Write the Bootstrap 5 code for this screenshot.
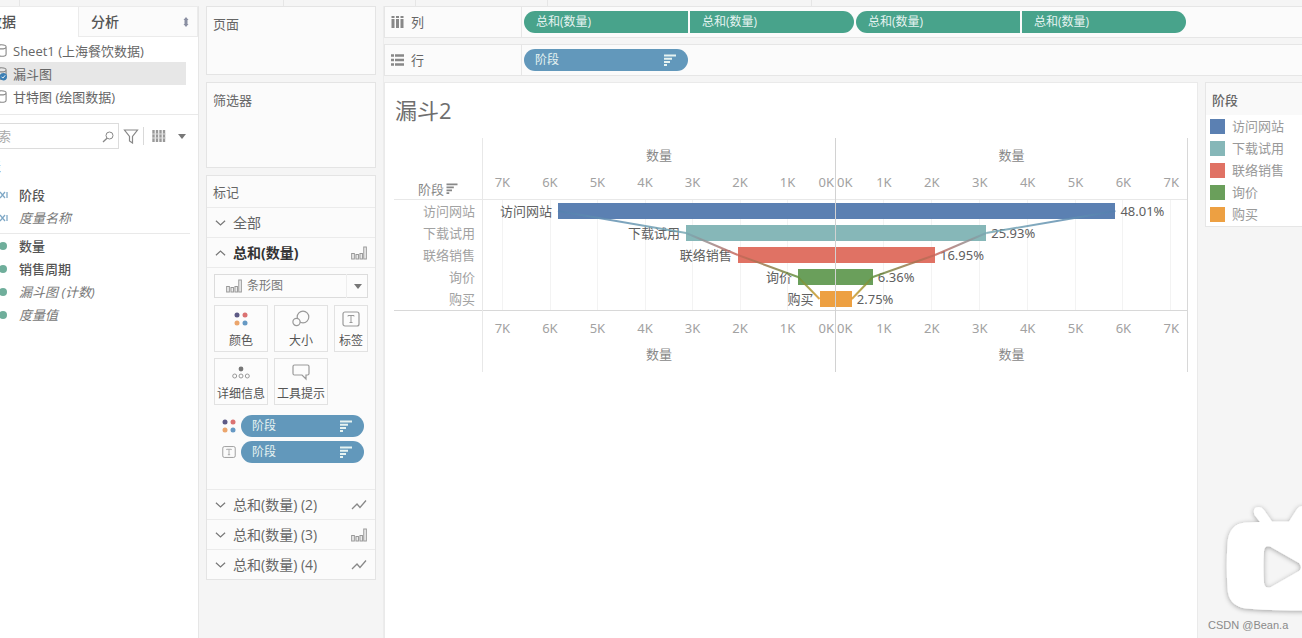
<!DOCTYPE html>
<html lang="zh-CN">
<head>
<meta charset="utf-8">
<meta name="viewport" content="width=device-width, initial-scale=1">
<title>漏斗2</title>
<link href="https://cdn.jsdelivr.net/npm/bootstrap@5.3.0/dist/css/bootstrap.min.css" rel="stylesheet">
<style>
  body { font-family: "Open Sans", "Noto Sans CJK SC", sans-serif; font-size: 13px; line-height: 18px; color: #666; background: #f5f5f5; overflow-x: hidden; }
  button { font: inherit; color: inherit; }
  svg { display: block; flex: none; }
  a { color: inherit; text-decoration: none; }
  .topstrip { height: 6px; padding-left: 19px; }
  .topstrip i { width: 132px; border-left: 1px solid #e6e6e6; }

  /* data pane */
  .datapane { width: 223px; margin-left: -24px; background: #fff; border-right: 1px solid #e6e6e6; border-top: 1px solid #ebebeb; }
  .dtab { height: 30px; font-size: 14px; border: 0; background: #fff; color: #555; font-weight: 500; }
  .dtab.first { width: 102px; padding-left: 12px; }
  .dtab.second { background: #fbfbfb; border: 1px solid #ebebeb; border-top: 0; padding: 0 7px 0 12px; }
  .sources { padding: 2px 0 6px; border-bottom: 1px solid #e9e9e9; margin-bottom: 8px; }
  .src { height: 23px; padding-left: 20px; margin-right: 12px; gap: 6px; }
  .src.on { background: #e7e7e7; }
  .find { height: 26px; width: 143px; border: 1px solid #dcdcdc; border-radius: 0; padding: 0 24px 0 8px; font-size: 13px; }
  .find::placeholder { color: #aaa; }
  .iconbtn { border: 0; background: none; padding: 0; }
  .fld { height: 23px; gap: 11px; padding-left: 22px; color: #555; }
  .fld span { font-weight: 500; }
  .fld em { color: #777; }
  .rule { height: 1px; background: #e9e9e9; }

  /* cards */
  .shelfcol { width: 185px; padding: 0 7px; gap: 7px; border-right: 1px solid #ececec; }
  .panelbox { background: #fbfbfb; border: 1px solid #e4e4e4; padding: 8px 6px; }
  .h-pages { height: 69px; } .h-filters { height: 86px; }
  .marktitle { padding: 7px 6px 6px; }
  .markrow { height: 30px; padding: 0 8px; border: 0; border-top: 1px solid #ebebeb; background: none; gap: 7px; font-size: 14px; color: #666; text-align: left; }
  .markrow.open { color: #333; font-weight: 700; }
  .markbody { border-top: 1px solid #ebebeb; padding: 6px 7px 26px; }
  .picker select { height: 24px; font-size: 12px; line-height: 16px; color: #777; padding: 0 30px 0 32px; border: 1px solid #dcdcdc; border-radius: 0; background: #fcfcfc; }
  .picker .lead-ico { left: 12px; top: 5px; }
  .picker .drop { right: 0; top: 0; width: 22px; height: 24px; border-left: 1px solid #eee; }
  .marks { display: grid; grid-template-columns: 54px 54px 1fr; gap: 6px; margin: 7px 0 10px; }
  .marks button { height: 47px; border: 1px solid #e2e2e2; background: #fcfcfc; padding: 4px 0 0; font-size: 12px; color: #555; gap: 4px; white-space: nowrap; }
  .markpill { padding: 0 4px 0 8px; gap: 5px; }
  .pill { height: 22px; border: 0; color: #e6f3f1; padding: 0 12px; font-size: 12px; }
  .pill.green { background: #48a38b; } .pill.blue { background: #6298bb; padding-left: 11px; }
  .w-shelf { width: 164px; }
  .r-l { border-radius: 11px 0 0 11px; } .r-r { border-radius: 0 11px 11px 0; }

  /* shelves */
  .shelves { gap: 6px; min-width: 0; }
  .shelf { height: 32px; background: #fbfbfb; border: 1px solid #e6e6e6; border-right: 0; gap: 2px; }
  .shelfname { width: 137px; border-right: 1px solid #e6e6e6; padding-left: 6px; gap: 7px; height: 30px; }

  /* worksheet */
  .sheet { background: #fff; border: 1px solid #eaeaea; border-bottom: 0; padding: 12px 9px 0; }
  .sheet h1 { font-size: 22px; line-height: 30px; margin: 0 0 13px 1px; color: #6e6e6e; font-weight: 400; }
  .funnel { display: grid; grid-template-columns: 88px 1fr 1fr; font-family: "Noto Sans", "Noto Sans CJK SC", sans-serif; }
  .heads { text-align: right; color: #a2a2a2; }
  .heads .top { height: 61px; padding: 0 24px 1px 0; color: #888; gap: 2px; }
  .heads .names { border-top: 1px solid #e8e8e8; border-bottom: 1px solid #d8d8d8; padding-right: 7px; }
  .heads .names div { line-height: 22px; }
  .pane { border-left: 1px solid #e8e8e8; min-width: 0; }
  .pane.right { border-left-color: #d2d2d2; border-right: 1px solid #d8d8d8; }
  .ptitle { line-height: 35px; text-align: center; color: #888; }
  .ticks { display: flex; height: 18px; color: #a2a2a2; }
  .ticks span { flex: none; text-align: center; width: var(--step); }
  .ticks span:first-child { width: calc(var(--step) / 2); text-align: left; padding-left: 1px; }
  .left .ticks, .left .line-row { flex-direction: row-reverse; }
  .left .ticks span:first-child { text-align: right; padding: 0 1px 0 0; }
  .left { --step: 13.5%; --dir: to left; } .right { --step: 13.65%; --dir: to right; }
  .ticks.above { margin-bottom: 8px; } .ticks.below { margin-top: 8px; }
  .plot { border-top: 1px solid #e8e8e8; border-bottom: 1px solid #d8d8d8; background: repeating-linear-gradient(var(--dir), transparent 0 calc(var(--step) - 1px), #f3f3f3 0 var(--step)); }
  .line-row { display: flex; align-items: center; height: 22px; gap: 6px; white-space: nowrap; color: #606060; }
  .right .line-row { gap: 5px; }
  .line-row i { height: 16px; flex: none; }
  .links { left: 0; top: 0; opacity: .85; }
  .links line { stroke-width: 2px; vector-effect: non-scaling-stroke; }

  /* legend */
  .legend { width: 97px; margin-left: 7px; background: #fff; border: 1px solid #e6e6e6; border-right: 0; padding-bottom: 1px; }
  .legend h2 { font-size: 13px; line-height: 18px; margin: 0; padding: 8px 6px 6px; background: #f9f9f9; font-weight: 500; }
  .legend li { height: 22px; padding-left: 4px; gap: 7px; color: #999; white-space: nowrap; }
  .legend li i { width: 15px; height: 15px; }
  .stamp { right: 0; bottom: 6px; width: 96px; }
  .stamp p { font: 11px/14px "Liberation Sans", sans-serif; color: #8a8a8a; margin: 0 0 0 2px; white-space: nowrap; }
</style>
</head>
<body>
<svg width="0" height="0" class="position-absolute">
  <defs>
    <symbol id="i-sort" viewBox="0 0 12 12"><path d="M0 1.5h12M0 4.8h8M0 8h6M0 11h3" stroke="currentColor" stroke-width="2"/></symbol>
    <symbol id="i-down" viewBox="0 0 12 8"><path d="M1 1.5l5 4.5 5-4.5" fill="none" stroke="#777" stroke-width="1.3"/></symbol>
    <symbol id="i-up" viewBox="0 0 12 8"><path d="M1 6.5l5-4.5 5 4.5" fill="none" stroke="#777" stroke-width="1.3"/></symbol>
    <symbol id="i-bars" viewBox="0 0 16 14"><path d="M.7 7.500h2.600v5.500H.7zM5 8.500h2.400v4.500H5zM9 7.500h2.400V13H9zM12.800 1h2.500v12h-2.500z" fill="none" stroke="#999" stroke-width="1.100"/></symbol>
    <symbol id="i-line" viewBox="0 0 16 12"><path d="M1 10l5-5 3 3.500 6-7" fill="none" stroke="#888" stroke-width="1.300"/></symbol>
    <symbol id="i-dots" viewBox="0 0 14 14"><circle cx="3" cy="3" r="2.500" fill="#5d5a85"/><circle cx="11" cy="3" r="2.500" fill="#db7272"/><circle cx="3" cy="11" r="2.500" fill="#eba56c"/><circle cx="11" cy="11" r="2.500" fill="#6699c4"/></symbol>
    <symbol id="i-text" viewBox="0 0 18 16"><rect x="1" y="1" width="16" height="14" rx="2" fill="none" stroke="#999" stroke-width="1.200"/><path d="M6 5.500V4.500h6v1M9 4.500v7M7.500 11.500h3" fill="none" stroke="#999"/></symbol>
    <symbol id="i-cyl" viewBox="0 0 12 15"><path d="M1 3.500v8c0 3 10 3 10 0v-8M1 3.500c0-3 10-3 10 0s-10 3-10 0z" fill="none" stroke="#888" stroke-width="1.200"/></symbol>
    <symbol id="i-caret" viewBox="0 0 8 5"><path d="M0 0h8L4 5z" fill="#777"/></symbol>
  </defs>
</svg>

<div class="d-flex flex-column min-vh-100 position-relative overflow-hidden">
  <div class="topstrip d-flex"><i></i><i class="border-0"></i><i></i><i></i><i></i><i class="border-0"></i><i></i></div>
  <div class="d-flex flex-grow-1">

    <aside class="datapane flex-shrink-0">
      <div class="d-flex">
        <button class="dtab first text-start">数据</button>
        <button class="dtab second d-flex flex-grow-1 align-items-center justify-content-between">分析
          <svg width="8" height="12" viewBox="0 0 8 12"><path d="M4 1L6.500 4h-5zM4 11L1.500 8h5zM2.500 3.500h3v5h-3z" fill="#8a8fa2"/></svg></button>
      </div>
      <div class="sources">
        <a href="#" class="src d-flex align-items-center"><svg width="11" height="15"><use href="#i-cyl"/></svg>Sheet1 (上海餐饮数据)</a>
        <a href="#" class="src on d-flex align-items-center"><svg width="11" height="15" viewBox="0 0 12 15"><use href="#i-cyl"/><circle cx="8" cy="11" r="4" fill="#3b7fb5"/><path d="M6 11l1.500 1.500L10 9.500" fill="none" stroke="#fff"/></svg>漏斗图</a>
        <a href="#" class="src d-flex align-items-center"><svg width="11" height="15"><use href="#i-cyl"/></svg>甘特图 (绘图数据)</a>
      </div>
      <div class="d-flex align-items-center">
        <div class="position-relative">
          <input class="find form-control" type="search" placeholder="搜索" aria-label="搜索">
          <svg class="position-absolute end-0 top-0 mt-2 me-1" width="14" height="12" viewBox="0 0 14 12"><circle cx="8.500" cy="4.500" r="3.500" fill="none" stroke="#888"/><path d="M6 7.200L2 11" stroke="#888" stroke-width="1.300"/></svg>
        </div>
        <button class="iconbtn ms-1" aria-label="筛选"><svg width="16" height="15" viewBox="0 0 16 15"><path d="M1.500 1h13L9.500 7.500V14l-3-2V7.500z" fill="none" stroke="#888" stroke-width="1.200"/></svg></button>
        <div class="vr ms-1 me-2 my-1 opacity-25"></div>
        <button class="iconbtn" aria-label="视图"><svg width="14" height="12" viewBox="0 0 14 12"><path d="M1.500 0v12M5 0v12M8.500 0v12M12 0v12" stroke="#999" stroke-width="2.400"/><path d="M0 4h14M0 8h14" stroke="#ddd"/></svg></button>
        <button class="iconbtn ms-2" aria-label="更多"><svg class="ms-1" width="8" height="5"><use href="#i-caret"/></svg></button>
      </div>
      <div class="mt-2 ps-2 ms-1 mb-2">表</div>
      <div class="fld d-flex align-items-center"><svg width="10" height="10" viewBox="0 0 10 10"><path d="M2 2l5 6M7 2L2 8M9 2v6" stroke="#7fa8c6" stroke-width="1.300"/></svg><span>阶段</span></div>
      <div class="fld d-flex align-items-center"><svg width="10" height="10" viewBox="0 0 10 10"><path d="M2 2l5 6M7 2L2 8M9 2v6" stroke="#7fa8c6" stroke-width="1.300"/></svg><em>度量名称</em></div>
      <div class="rule me-2 mt-1"></div>
      <div class="fld d-flex align-items-center"><svg width="10" height="10"><circle cx="5" cy="5" r="4" fill="#6fae9b"/></svg><span>数量</span></div>
      <div class="fld d-flex align-items-center"><svg width="10" height="10"><circle cx="5" cy="5" r="4" fill="#6fae9b"/></svg><span>销售周期</span></div>
      <div class="fld d-flex align-items-center"><svg width="10" height="10"><circle cx="5" cy="5" r="4" fill="#6fae9b"/></svg><em>漏斗图 (计数)</em></div>
      <div class="fld d-flex align-items-center"><svg width="10" height="10"><circle cx="5" cy="5" r="4" fill="#6fae9b"/></svg><em>度量值</em></div>
    </aside>

    <section class="shelfcol d-flex flex-column flex-shrink-0">
      <div class="panelbox h-pages">页面</div>
      <div class="panelbox h-filters">筛选器</div>
      <div class="panelbox p-0">
        <div class="marktitle">标记</div>
        <button class="markrow w-100 d-flex align-items-center"><svg width="11" height="8"><use href="#i-down"/></svg>全部</button>
        <button class="markrow open w-100 d-flex align-items-center"><svg width="11" height="8"><use href="#i-up"/></svg>总和(数量)<svg class="ms-auto" width="16" height="14"><use href="#i-bars"/></svg></button>
        <div class="markbody">
          <div class="picker position-relative">
            <select class="form-select" aria-label="标记类型"><option>条形图</option></select>
            <svg class="lead-ico position-absolute" width="16" height="14"><use href="#i-bars"/></svg>
            <span class="drop position-absolute d-flex align-items-center justify-content-center pe-none"><svg width="8" height="5"><use href="#i-caret"/></svg></span>
          </div>
          <div class="marks">
            <button class="d-flex flex-column align-items-center"><svg width="14" height="18"><use href="#i-dots"/></svg>颜色</button>
            <button class="d-flex flex-column align-items-center"><svg width="18" height="18" viewBox="0 0 18 18"><circle cx="11" cy="7" r="5.800" fill="none" stroke="#999" stroke-width="1.200"/><circle cx="4.500" cy="12" r="3.600" fill="#fcfcfc" stroke="#999" stroke-width="1.200"/></svg>大小</button>
            <button class="d-flex flex-column align-items-center"><svg width="18" height="18"><use href="#i-text"/></svg>标签</button>
            <button class="d-flex flex-column align-items-center"><svg width="18" height="18" viewBox="0 0 18 18"><circle cx="9" cy="6" r="2.400" fill="#777"/><g fill="none" stroke="#999"><circle cx="2.700" cy="13" r="2"/><circle cx="9" cy="13" r="2"/><circle cx="15.300" cy="13" r="2"/></g></svg>详细信息</button>
            <button class="d-flex flex-column align-items-center"><svg width="18" height="18" viewBox="0 0 18 18"><path d="M2.500 2h13q1.500 0 1.500 1.500v7q0 1.500-1.500 1.500H14v4l-4-4H2.500Q1 12 1 10.500v-7Q1 2 2.500 2z" fill="none" stroke="#999" stroke-width="1.200"/></svg>工具提示</button>
          </div>
          <div class="markpill d-flex align-items-center mb-1"><svg width="14" height="14"><use href="#i-dots"/></svg><button class="pill blue rounded-pill flex-grow-1 d-flex align-items-center justify-content-between">阶段<svg width="12" height="12"><use href="#i-sort"/></svg></button></div>
          <div class="markpill d-flex align-items-center"><svg width="14" height="16"><use href="#i-text"/></svg><button class="pill blue rounded-pill flex-grow-1 d-flex align-items-center justify-content-between">阶段<svg width="12" height="12"><use href="#i-sort"/></svg></button></div>
        </div>
        <button class="markrow w-100 d-flex align-items-center"><svg width="11" height="8"><use href="#i-down"/></svg>总和(数量) (2)<svg class="ms-auto" width="16" height="12"><use href="#i-line"/></svg></button>
        <button class="markrow w-100 d-flex align-items-center"><svg width="11" height="8"><use href="#i-down"/></svg>总和(数量) (3)<svg class="ms-auto" width="16" height="14"><use href="#i-bars"/></svg></button>
        <button class="markrow w-100 d-flex align-items-center"><svg width="11" height="8"><use href="#i-down"/></svg>总和(数量) (4)<svg class="ms-auto" width="16" height="12"><use href="#i-line"/></svg></button>
      </div>
    </section>

    <main class="shelves flex-grow-1 d-flex flex-column">
      <div class="shelf d-flex align-items-center">
        <div class="shelfname d-flex align-items-center"><svg width="13" height="12" viewBox="0 0 13 12"><path d="M2 0v2M6.500 0v2M11 0v2M2 3v9M6.500 3v9M11 3v9" stroke="#888" stroke-width="3"/></svg>列</div>
        <button class="pill green w-shelf r-l text-start">总和(数量)</button>
        <button class="pill green w-shelf r-r text-start">总和(数量)</button>
        <button class="pill green w-shelf r-l text-start">总和(数量)</button>
        <button class="pill green w-shelf r-r text-start">总和(数量)</button>
      </div>
      <div class="shelf d-flex align-items-center">
        <div class="shelfname d-flex align-items-center"><svg width="13" height="12" viewBox="0 0 13 12"><path d="M0 1.500h3M0 6h3M0 10.500h3M4 1.500h9M4 6h9M4 10.500h9" stroke="#888" stroke-width="2.400"/></svg>行</div>
        <button class="pill blue w-shelf rounded-pill d-flex align-items-center justify-content-between">阶段<svg width="12" height="12"><use href="#i-sort"/></svg></button>
      </div>
      <div class="d-flex flex-grow-1 align-items-stretch">
        <article class="sheet flex-grow-1">
          <h1>漏斗2</h1>
          <div class="funnel">
            <div class="heads">
              <div class="top d-flex align-items-end justify-content-end">阶段<svg class="mb-1" width="12" height="11"><use href="#i-sort"/></svg></div>
              <div class="names" id="names"></div>
            </div>
            <div class="pane left" data-side="left"></div>
            <div class="pane right" data-side="right"></div>
          </div>
        </article>
        <div class="flex-shrink-0">
          <div class="legend">
            <h2>阶段</h2>
            <ul class="list-unstyled mb-0" id="legend"></ul>
          </div>
        </div>
      </div>
    </main>
  </div>

  <div class="stamp position-absolute">
    <svg class="ms-auto" width="84" height="118" viewBox="1218 500 84 118">
      <defs><filter id="sh" x="-20%" y="-20%" width="140%" height="140%"><feDropShadow dx="0" dy="1" stdDeviation="2.500" flood-color="#000" flood-opacity=".35"/></filter></defs>
      <g filter="url(#sh)">
        <path fill="#fff" fill-rule="evenodd" d="M1245 522.500L1260 522L1254.500 515Q1252 507 1259 507Q1262 507 1264 510L1272 521.500H1289L1297 509Q1299 506 1303 506Q1309 507 1307 513L1302 522Q1340 522 1340 548V585Q1340 610 1315 610.500Q1275 611 1246 608.500Q1228 606 1227.500 588Q1226 566 1227.500 543Q1229 524 1245 522.500ZM1270 546.500Q1264.500 545 1264 551Q1263 566 1264 583Q1265 589 1271 587L1299 571Q1303 567.500 1299 563Z"/>
      </g>
    </svg>
    <p>CSDN @Bean.a</p>
  </div>
</div>

<script src="https://cdn.jsdelivr.net/npm/bootstrap@5.3.0/dist/js/bootstrap.bundle.min.js"></script>
<script>
  // width of each stage's bar on either side, in percent of the pane
  const stages = [
    { name: '访问网站', color: '#5b80b2', share: '48.01%', left: 78.7, right: 79.6 },
    { name: '下载试用', color: '#86b7b8', share: '25.93%', left: 42.3, right: 42.8 },
    { name: '联络销售', color: '#e07264', share: '16.95%', left: 27.6, right: 28.2 },
    { name: '询价', color: '#6a9f5b', share: '6.36%', left: 10.5, right: 10.5 },
    { name: '购买', color: '#eda042', share: '2.75%', left: 4.4, right: 4.5 }
  ];
  const shades = ['#5580b0', '#78a9b4', '#c9665a', '#63923f', '#dc9a2c'];
  const ticks = pos => `<div class="ticks ${pos}">${[0,1,2,3,4,5,6,7].map(n => `<span>${n}K</span>`).join('')}</div>`;
  document.querySelectorAll('.pane').forEach(pane => {
    const side = pane.dataset.side;
    const x = s => side === 'left' ? 100 - s.left : s.right;
    const rows = stages.map(s => `<div class="line-row"><i style="width:${s[side]}%;background:${s.color}"></i><span>${side === 'left' ? s.name : s.share}</span></div>`).join('');
    let defs = '', lines = '';
    for (let i = 0; i < 4; i++) {
      const p = `x1="${x(stages[i])}" y1="${11 + 22 * i}" x2="${x(stages[i + 1])}" y2="${33 + 22 * i}"`;
      defs += `<linearGradient id="${side}${i}" gradientUnits="userSpaceOnUse" ${p}><stop offset="0" stop-color="${shades[i]}"/><stop offset="1" stop-color="${shades[i + 1]}"/></linearGradient>`;
      lines += `<line ${p} stroke="url(#${side}${i})"/>`;
    }
    pane.innerHTML = `<div class="ptitle">数量</div>${ticks('above')}
      <div class="plot position-relative">${rows}<svg class="links position-absolute w-100 h-100" viewBox="0 0 100 110" preserveAspectRatio="none"><defs>${defs}</defs>${lines}</svg></div>
      ${ticks('below')}<div class="ptitle">数量</div>`;
  });
  document.getElementById('names').innerHTML = stages.map(s => `<div>${s.name}</div>`).join('');
  document.getElementById('legend').innerHTML = stages.map(s => `<li class="d-flex align-items-center"><i style="background:${s.color}"></i>${s.name}</li>`).join('');
</script>
</body>
</html>
